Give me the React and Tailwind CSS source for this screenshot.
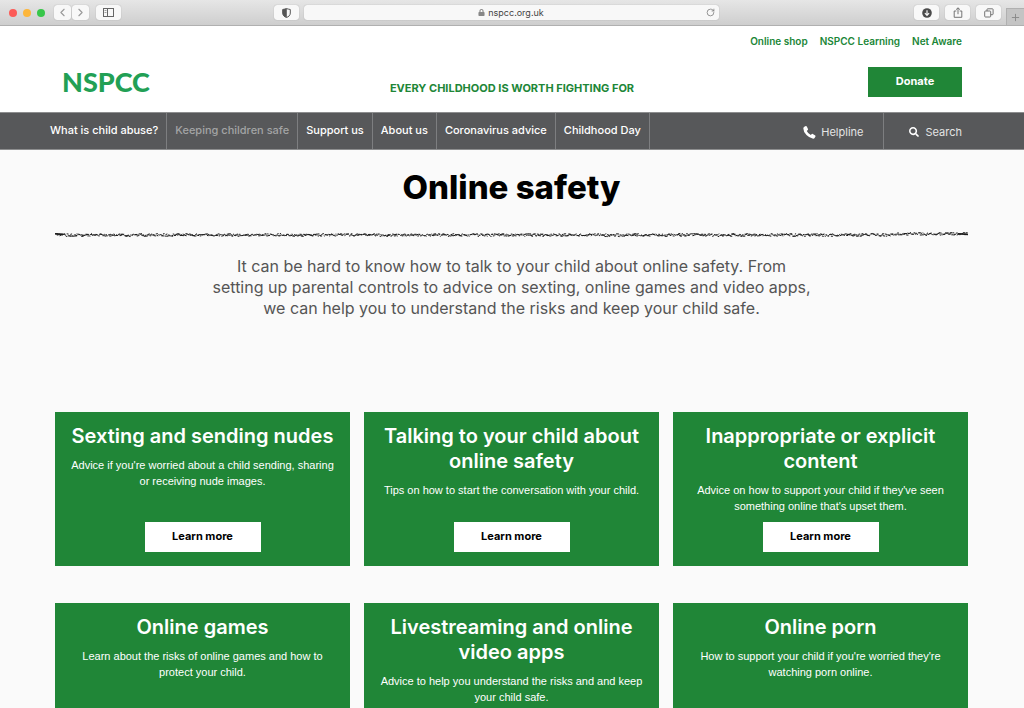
import React from 'react';
import { ChevronLeft, ChevronRight, RotateCw, Plus } from 'lucide-react';
import { FaPhoneAlt, FaSearch, FaLock } from 'react-icons/fa';

const brandFont = "font-['Inter',sans-serif]";

const topLinks = ['Online shop', 'NSPCC Learning', 'Net Aware'];

const navItems = [
  { label: 'What is child abuse?' },
  { label: 'Keeping children safe', active: true },
  { label: 'Support us' },
  { label: 'About us' },
  { label: 'Coronavirus advice' },
  { label: 'Childhood Day' },
];

const topics = [
  {
    title: 'Sexting and sending nudes',
    text: "Advice if you're worried about a child sending, sharing or receiving nude images.",
    action: 'Learn more',
  },
  {
    title: 'Talking to your child about online safety',
    text: 'Tips on how to start the conversation with your child.',
    action: 'Learn more',
  },
  {
    title: 'Inappropriate or explicit content',
    text: "Advice on how to support your child if they've seen something online that's upset them.",
    action: 'Learn more',
  },
  {
    title: 'Online games',
    text: 'Learn about the risks of online games and how to protect your child.',
  },
  {
    title: 'Livestreaming and online video apps',
    text: 'Advice to help you understand the risks and and keep your child safe.',
  },
  {
    title: 'Online porn',
    text: "How to support your child if you're worried they're watching porn online.",
  },
];

function ToolbarButton({ label, className = '', children }) {
  return (
    <button
      type="button"
      aria-label={label}
      className={`flex h-[15px] items-center justify-center rounded-[3px] bg-[#f8f8f8] shadow-[0_0_1px_rgba(0,0,0,0.35)] ${className}`}
    >
      {children}
    </button>
  );
}

function BrowserBar() {
  return (
    <div className="relative flex h-[26px] items-center border-b border-[#b0b0b0] bg-gradient-to-b from-[#e6e6e6] to-[#cecece] pl-[9px] pr-[23px]">
      <div className="flex gap-[6px]">
        <span className="h-2 w-2 rounded-full bg-[#fc5b57]" />
        <span className="h-2 w-2 rounded-full bg-[#fdb63b]" />
        <span className="h-2 w-2 rounded-full bg-[#37c649]" />
      </div>
      <div className="ml-[9px] flex gap-px">
        <ToolbarButton label="Back" className="w-[17px] text-[#999]">
          <ChevronLeft size={13} />
        </ToolbarButton>
        <ToolbarButton label="Forward" className="w-[17px] text-[#999]">
          <ChevronRight size={13} />
        </ToolbarButton>
      </div>
      <ToolbarButton label="Sidebar" className="ml-[7px] w-[25px] text-[#666]">
        <svg width="11" height="9" viewBox="0 0 11 9" fill="none" stroke="currentColor">
          <rect x="0.5" y="0.5" width="10" height="8" />
          <path d="M4.5 0.5v8" />
          <path d="M1.5 2.5h2M1.5 4.5h2" strokeOpacity="0.6" />
        </svg>
      </ToolbarButton>

      <div className="flex flex-1 items-center justify-center gap-[5px] pl-[133px]">
        <ToolbarButton label="Privacy report" className="w-[25px] shrink-0 text-[#555]">
          <svg width="9" height="10" viewBox="0 0 9 10">
            <path d="M4.5 0.6C5.6 1 7 1.2 8.3 1.5V5c0 2.4-1.7 3.8-3.8 4.5C2.4 8.8 0.7 7.4 0.7 5V1.5C2 1.2 3.4 1 4.5 0.6Z" fill="none" stroke="currentColor" />
            <path d="M4.8 0.6C3.4 1 2 1.2 0.7 1.5V5c0 2.4 1.7 3.8 4.1 4.5Z" fill="currentColor" />
          </svg>
        </ToolbarButton>
        <div className="relative flex h-[15px] w-full max-w-[415px] items-center justify-center gap-[3px] rounded-[3px] bg-[#f8f8f8] text-[9px] leading-none text-[#444] shadow-[0_0_1px_rgba(0,0,0,0.35)]">
          <FaLock size={7} className="text-[#888]" />
          <span>nspcc.org.uk</span>
          <button type="button" aria-label="Reload" className="absolute right-[4px] text-[#777]">
            <RotateCw size={9} />
          </button>
        </div>
      </div>

      <div className="ml-[176px] flex gap-[6px]">
        <ToolbarButton label="Downloads" className="w-[25px] text-[#4a4a4a]">
          <svg width="10" height="10" viewBox="0 0 10 10">
            <circle cx="5" cy="5" r="4.8" fill="currentColor" />
            <path d="M5 2.2V7.2M2.9 5.2L5 7.4L7.1 5.2" fill="none" stroke="#f8f8f8" strokeWidth="1.2" />
          </svg>
        </ToolbarButton>
        <ToolbarButton label="Share" className="w-[25px] text-[#666]">
          <svg width="10" height="11" viewBox="0 0 10 11" fill="none" stroke="currentColor" strokeWidth="0.9">
            <path d="M3.3 4H1.2V10.3H8.8V4H6.7M5 7.2V0.9M3 2.7L5 0.8L7 2.7" />
          </svg>
        </ToolbarButton>
        <ToolbarButton label="Tabs" className="w-[25px] text-[#666]">
          <svg width="10" height="10" viewBox="0 0 10 10" fill="none" stroke="currentColor" strokeWidth="0.9">
            <rect x="0.7" y="3" width="6" height="6" rx="0.8" />
            <path d="M3 3V1.5Q3 0.8 3.7 0.8H8.3Q9.1 0.8 9.1 1.5V6Q9.1 6.7 8.3 6.7H6.8" />
          </svg>
        </ToolbarButton>
      </div>
      <button
        type="button"
        aria-label="New tab"
        className="absolute bottom-0 right-0 flex h-[17px] w-[18px] items-center justify-center border-l border-t border-[#b0b0b0] bg-[#c4c4c4] text-[#888]"
      >
        <Plus size={11} strokeWidth={2} />
      </button>
    </div>
  );
}

function Header() {
  return (
    <header className="bg-white px-[62px] pb-[15px] pt-[9px] text-[#208637]">
      <ul className="flex justify-end gap-[12px] text-[10px] font-semibold leading-[12px]">
        {topLinks.map((link) => (
          <li key={link}>
            <a href="#">{link}</a>
          </li>
        ))}
      </ul>
      <div className="mt-[20px] grid grid-cols-[1fr_auto_1fr] items-center">
        <a href="#" className="font-['Lato',sans-serif] text-[27px] font-black leading-[30px] text-[#22a055]">
          NSPCC
        </a>
        <p className="pt-3 text-[11px] font-bold leading-[18px]">EVERY CHILDHOOD IS WORTH FIGHTING FOR</p>
        <button type="button" className="h-[30px] w-[94px] justify-self-end bg-[#208637] pb-[2px] text-[11px] font-bold text-white">
          Donate
        </button>
      </div>
    </header>
  );
}

function Nav() {
  return (
    <nav className="flex h-[38px] border-y border-[#8d8e8f] bg-[#57585a] pl-[41px] text-[11px] text-white">
      {navItems.map((item) => (
        <a
          key={item.label}
          href="#"
          className={`flex items-center border-r border-[#7d7e80] px-[8px] pb-[2px] font-medium first:pl-[9px] ${item.active ? 'text-[#a3a4a5]' : ''}`}
        >
          {item.label}
        </a>
      ))}
      <a href="#" className="ml-auto flex items-center gap-[5px] border-r border-[#7d7e80] pr-[20px] pt-[2px] text-[#e4e4e4]">
        {/* classic handset, earpiece at the top left */}
        <svg width="13" height="13" viewBox="0 0 12 12" fill="#fff">
          <path d="M1.2 0.7L2.6 0.1Q3.2 0 3.5 0.5L4.6 2.7Q4.8 3.200 4.400 3.600L3.500 4.500Q4.600 6.800 7.200 8.300L8.100 7.400Q8.600 7 9.100 7.300L11.300 8.700Q11.800 9.100 11.500 9.600L10.700 11Q10.300 11.700 9.400 11.700Q5.900 11.300 3.200 8.400Q0.400 5.400 0.300 2.200Q0.300 1.200 1.200 0.700Z" />
        </svg>
        Helpline
      </a>
      <a href="#" className="flex items-center gap-[6px] pl-[25px] pr-[62px] pt-[2px] text-[#e4e4e4]">
        <FaSearch size={10} className="text-white" />
        Search
      </a>
    </nav>
  );
}

// Chalky rule: short specks scattered round a line that steps up near the right end
function RoughLine() {
  let seed = 11;
  const rand = () => {
    seed = (seed * 16807) % 2147483647;
    return seed / 2147483647;
  };
  const specks = [];
  for (let x = 0; x < 912; x += 0.9) {
    const centre = x > 842 ? 1.9 : 3;
    const y = centre + (rand() - 0.5) * 2.4;
    const length = 0.8 + rand() * 1.6;
    specks.push(`M${x.toFixed(1)} ${y.toFixed(1)}l${length.toFixed(1)} ${(rand() - 0.5).toFixed(1)}`);
  }
  return (
    <svg className="block h-[6px] w-full" viewBox="0 0 914 6" preserveAspectRatio="none" fill="none" stroke="#1c1c1c">
      <path d={specks.join('')} />
      <path d="M0 1.8L8 2.4M904 1.8L914 2.4" strokeWidth="1.6" />
    </svg>
  );
}

function TopicCard({ title, text, action }) {
  return (
    <article className="flex min-h-[105px] flex-col items-center bg-[#208637] px-[14px] pt-[12px] text-center text-white">
      <h2 className="text-[20px] font-semibold leading-[25px]">{title}</h2>
      <p className="mt-2 font-['Liberation_Sans',Arial,sans-serif] text-[11px] leading-[16px]">{text}</p>
      {action && (
        <div className="mt-auto pb-[14px] pt-2">
          <button type="button" className="block h-[30px] w-[116px] bg-white pb-[2px] text-[11px] font-bold text-black">
            {action}
          </button>
        </div>
      )}
    </article>
  );
}

export default function App() {
  return (
    <div className={`min-h-screen bg-[#fafafa] ${brandFont}`}>
      <BrowserBar />
      <Header />
      <Nav />
      <main className="pl-[55px] pr-[56px] pt-[17px]">
        <h1 className="text-center text-[33px] font-extrabold leading-[40px] text-black">Online safety</h1>
        <div className="mt-[25px]">
          <RoughLine />
        </div>
        <p className="mx-auto mt-[18px] max-w-[603px] text-center text-[16px] leading-[21px] text-[#555]">
          It can be hard to know how to talk to your child about online safety. From setting up parental controls to
          advice on sexting, online games and video apps, we can help you to understand the risks and keep your child
          safe.
        </p>
        <section className="mt-[93px] grid grid-cols-3 gap-x-[14px] gap-y-[37px]">
          {topics.map((topic) => (
            <TopicCard key={topic.title} {...topic} />
          ))}
        </section>
      </main>
    </div>
  );
}
